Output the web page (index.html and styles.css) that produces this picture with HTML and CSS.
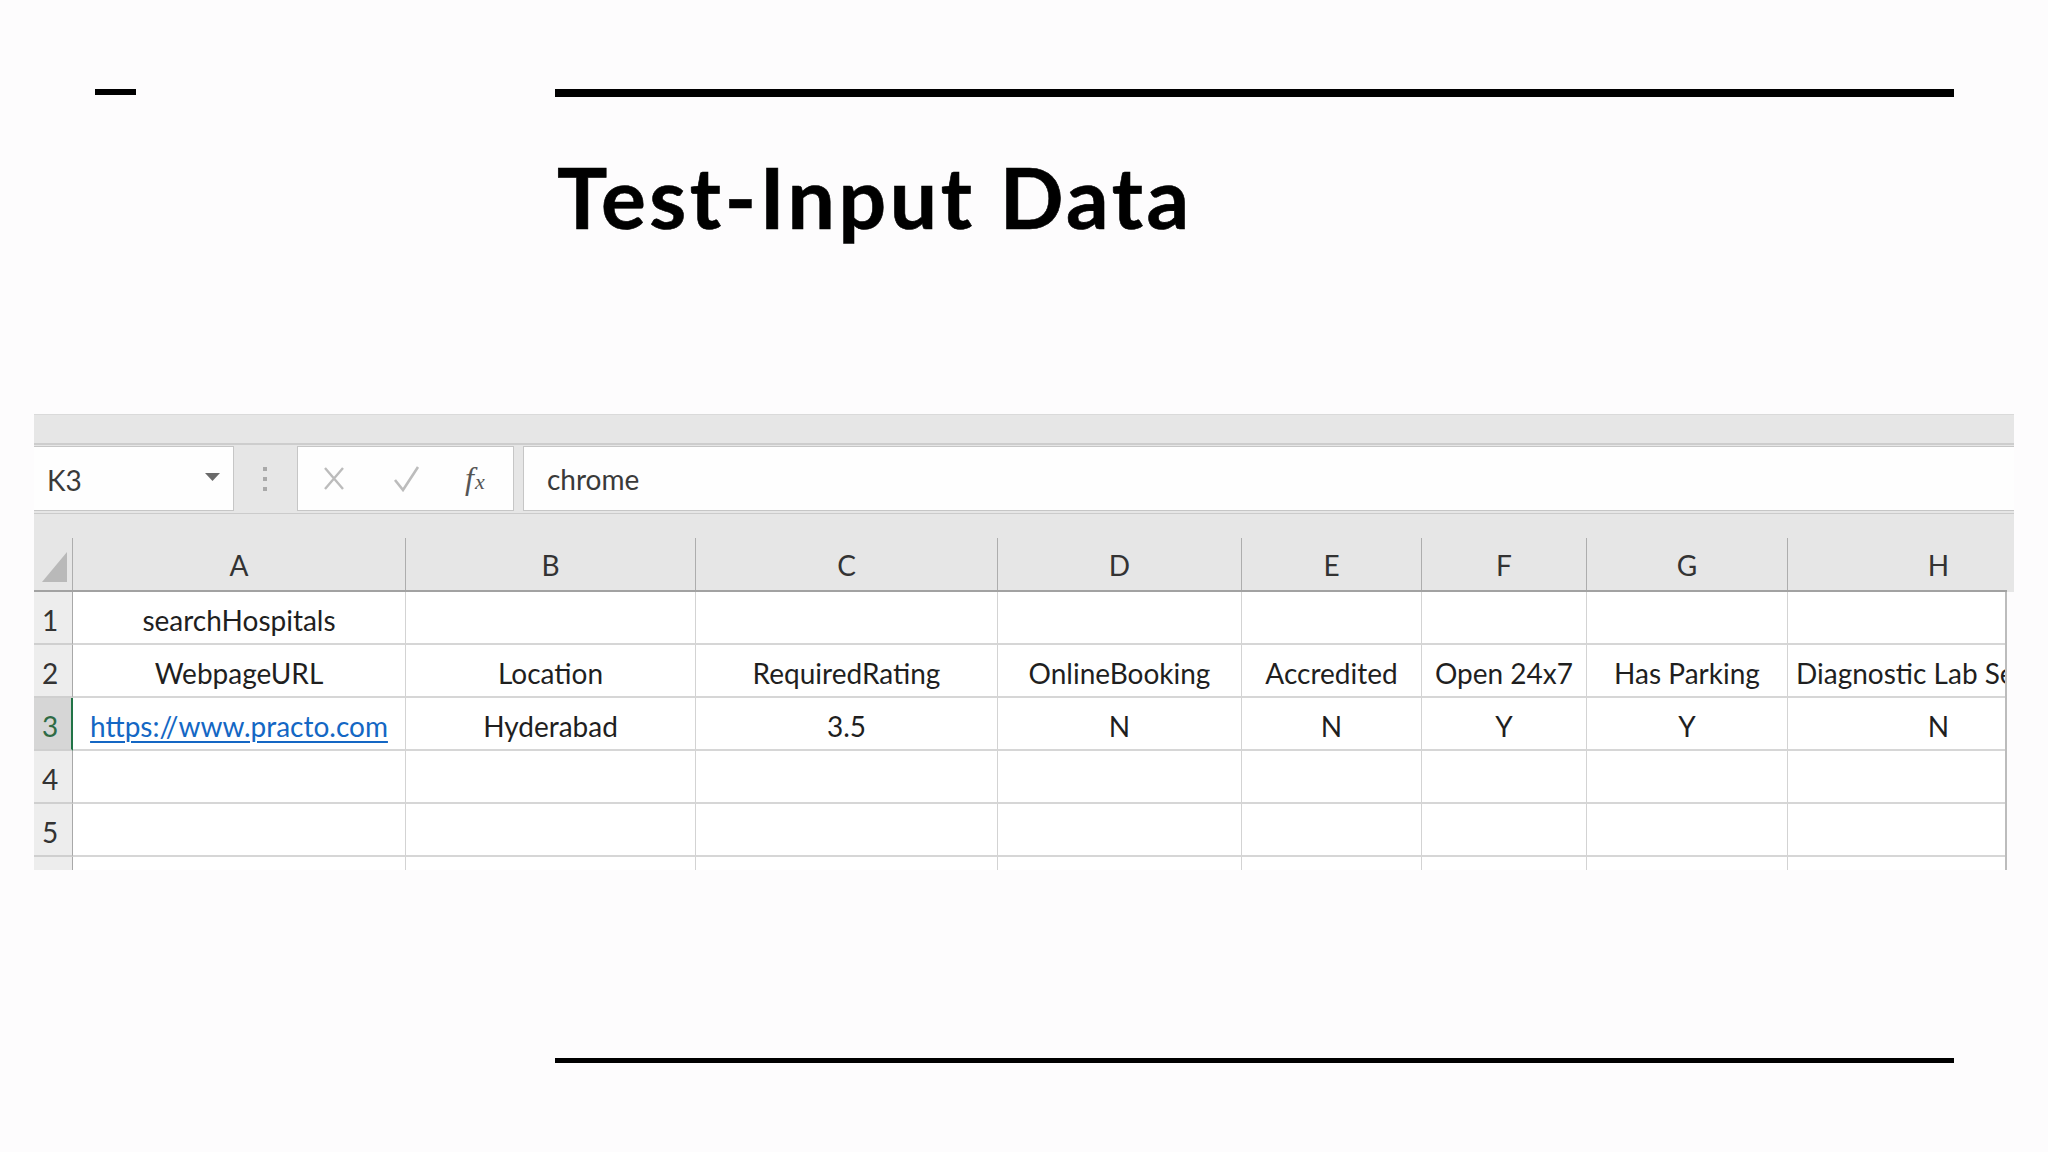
FILE: index.html
```html
<!DOCTYPE html>
<html>
<head>
<meta charset="utf-8">
<link rel="stylesheet" href="styles.css">
</head>
<body>
<div class="slide">
  <div class="top">
    <div class="dash"></div>
    <div class="rule"></div>
  </div>
  <h1 class="title">Test-Input Data</h1>

  <div class="excel">
    <div class="ribbon"></div>
    <div class="fbar">
      <div class="namebox">
        <span>K3</span>
        <svg class="drop" width="15" height="8" viewBox="0 0 15 8"><polygon points="0,0 15,0 7.5,8" fill="#6a6a6a"/></svg>
      </div>
      <div class="grip"><i></i><i></i><i></i></div>
      <div class="fxbox">
        <svg class="ico-x" width="22" height="27" viewBox="0 0 22 27"><path d="M2 3 L20 24 M20 3 L2 24" stroke="#bcbcbc" stroke-width="2.4" fill="none"/></svg>
        <svg class="ico-check" width="27" height="27" viewBox="0 0 27 27"><path d="M2 15 L10 25 L25 2" stroke="#bcbcbc" stroke-width="2.6" fill="none"/></svg>
        <span class="fx"><span class="fx-f">f</span><span class="fx-x">x</span></span>
      </div>
      <div class="formula">chrome</div>
    </div>

    <div class="colband">
      <div class="clip">
        <div class="grid head">
          <div class="corner"><span class="tri"></span></div>
          <div class="ch">A</div>
          <div class="ch">B</div>
          <div class="ch">C</div>
          <div class="ch">D</div>
          <div class="ch">E</div>
          <div class="ch">F</div>
          <div class="ch">G</div>
          <div class="ch">H</div>
        </div>
      </div>
    </div>

    <div class="sheetwrap">
      <div class="clip body">
        <div class="grid rows">
          <div class="rh">1</div>
          <div class="c">searchHospitals</div>
          <div class="c"></div><div class="c"></div><div class="c"></div><div class="c"></div><div class="c"></div><div class="c"></div><div class="c"></div>

          <div class="rh">2</div>
          <div class="c">WebpageURL</div>
          <div class="c">Location</div>
          <div class="c">RequiredRating</div>
          <div class="c">OnlineBooking</div>
          <div class="c">Accredited</div>
          <div class="c">Open 24x7</div>
          <div class="c">Has Parking</div>
          <div class="c left">Diagnostic Lab Services</div>

          <div class="rh sel">3</div>
          <div class="c"><span class="link">https://www.practo.com</span></div>
          <div class="c">Hyderabad</div>
          <div class="c">3.5</div>
          <div class="c">N</div>
          <div class="c">N</div>
          <div class="c">Y</div>
          <div class="c">Y</div>
          <div class="c">N</div>

          <div class="rh">4</div>
          <div class="c"></div><div class="c"></div><div class="c"></div><div class="c"></div><div class="c"></div><div class="c"></div><div class="c"></div><div class="c"></div>

          <div class="rh">5</div>
          <div class="c"></div><div class="c"></div><div class="c"></div><div class="c"></div><div class="c"></div><div class="c"></div><div class="c"></div><div class="c"></div>

          <div class="rh"></div>
          <div class="c"></div><div class="c"></div><div class="c"></div><div class="c"></div><div class="c"></div><div class="c"></div><div class="c"></div><div class="c"></div>
        </div>
      </div>
    </div>
  </div>

  <div class="bottom-rule"></div>
</div>
</body>
</html>
```

FILE: styles.css
```css
* { box-sizing: border-box; }
html, body { margin: 0; padding: 0; }
body { background: #fdfcfd; }

.slide {
  width: 2048px;
  height: 1152px;
  overflow: hidden;
  background: #fdfcfd;
  font-family: "Lato", "Liberation Sans", sans-serif;
}

.top {
  display: flex;
  align-items: flex-start;
  padding-top: 89px;
}
.dash {
  margin-left: 95px;
  width: 41px;
  height: 6px;
  background: #000;
}
.rule {
  margin-left: 419px;
  width: 1399px;
  height: 8px;
  background: #000;
}

.title {
  margin: 58px 0 0 557px;
  font-family: "Lato", sans-serif;
  font-weight: 700;
  font-size: 84px;
  line-height: 84px;
  height: 84px;
  letter-spacing: 3.6px;
  color: #000;
  -webkit-text-stroke: 0.6px #000;
}

/* ---------- Excel screenshot ---------- */
.excel {
  margin: 175px 0 0 34px;
  width: 1980px;
  font-family: "Lato", "Liberation Sans", sans-serif;
  font-size: 28px;
  color: #222;
}
.ribbon {
  height: 31px;
  background: #e6e6e6;
  border-top: 1px solid #dadada;
  border-bottom: 2px solid #cdcdcd;
}
.fbar {
  display: flex;
  align-items: flex-start;
  height: 68px;
  padding: 1px 0 2px;
  background: #e6e6e6;
}
.namebox {
  width: 200px;
  height: 65px;
  background: #fefefe;
  border: 1px solid #c6c6c6;
  border-left: none;
  display: flex;
  align-items: center;
  justify-content: space-between;
  padding: 0 13px 0 13px;
  color: #3a3a3a;
}
.namebox span { line-height: 1; padding-top: 2px; }
.drop { margin-top: -4px; }
.grip {
  margin-left: 29px;
  width: 4px;
  height: 65px;
  display: flex;
  flex-direction: column;
  justify-content: center;
  gap: 6px;
}
.grip i {
  display: block;
  width: 4px;
  height: 4px;
  background: #a9a9a9;
}
.fxbox {
  margin-left: 30px;
  width: 217px;
  height: 65px;
  background: #fefefe;
  border: 1px solid #c6c6c6;
  display: flex;
  align-items: center;
  padding-left: 25px;
}
.ico-check { margin-left: 48px; }
.fx {
  margin-left: 45px;
  font-family: "Liberation Serif", serif;
  font-style: italic;
  color: #555;
  display: flex;
  align-items: baseline;
}
.fx-f { font-size: 32px; }
.fx-x { font-size: 22px; margin-left: 1px; }
.formula {
  margin-left: 9px;
  flex: 1;
  height: 65px;
  background: #fefefe;
  border: 1px solid #c6c6c6;
  border-right: none;
  display: flex;
  align-items: center;
  padding-left: 23px;
  padding-top: 1px;
  color: #3a3a3a;
}

.colband {
  height: 79px;
  background: #e6e6e6;
  border-top: 1px solid #cbcbcb;
  padding-top: 24px;
}
.clip {
  width: 1973px;
  overflow: hidden;
}
.grid {
  display: grid;
  grid-template-columns: 39px 333px 290px 302px 244px 180px 165px 201px 302px;
  width: 2056px;
}
.head { height: 54px; border-bottom: 2px solid #a2a2a2; }
.ch, .corner {
  height: 52px;
  border-right: 1px solid #adadad;
  display: flex;
  align-items: center;
  justify-content: center;
  color: #333;
  padding-top: 2px;
}
.corner {
  justify-content: flex-start;
  align-items: flex-end;
  padding: 0 0 8px 8px;
}
.tri {
  display: block;
  width: 25px;
  height: 30px;
  background: #b9b9b9;
  clip-path: polygon(100% 0, 100% 100%, 0 100%);
}

.sheetwrap {
  height: 278px;
  background: #fdfcfd;
}
.body {
  height: 278px;
  background: #fff;
  border-right: 2px solid #bcbcbc;
}
.rows { grid-auto-rows: 53px; }
.c, .rh {
  height: 53px;
  border-bottom: 2px solid #d6d6d6;
  border-right: 1px solid #d3d3d3;
  padding-top: 5px;
  line-height: 47px;
  white-space: nowrap;
  overflow: hidden;
}
.c {
  text-align: center;
  color: #1f1f1f;
}
.c.left { text-align: left; padding-left: 8px; }
.rh {
  background: #ededed;
  border-right: 1px solid #a8a8a8;
  border-bottom-color: #cfcfcf;
  padding-left: 8px;
  color: #333;
}
.rh.sel {
  background: #d6d6d6;
  color: #2f6b45;
  border-right: 2px solid #217346;
}
.link {
  color: #1467c4;
  text-decoration: underline;
  text-decoration-thickness: 2px;
  text-underline-offset: 4px;
}

.bottom-rule {
  margin: 188px 0 0 555px;
  width: 1399px;
  height: 5px;
  background: #000;
}
```
